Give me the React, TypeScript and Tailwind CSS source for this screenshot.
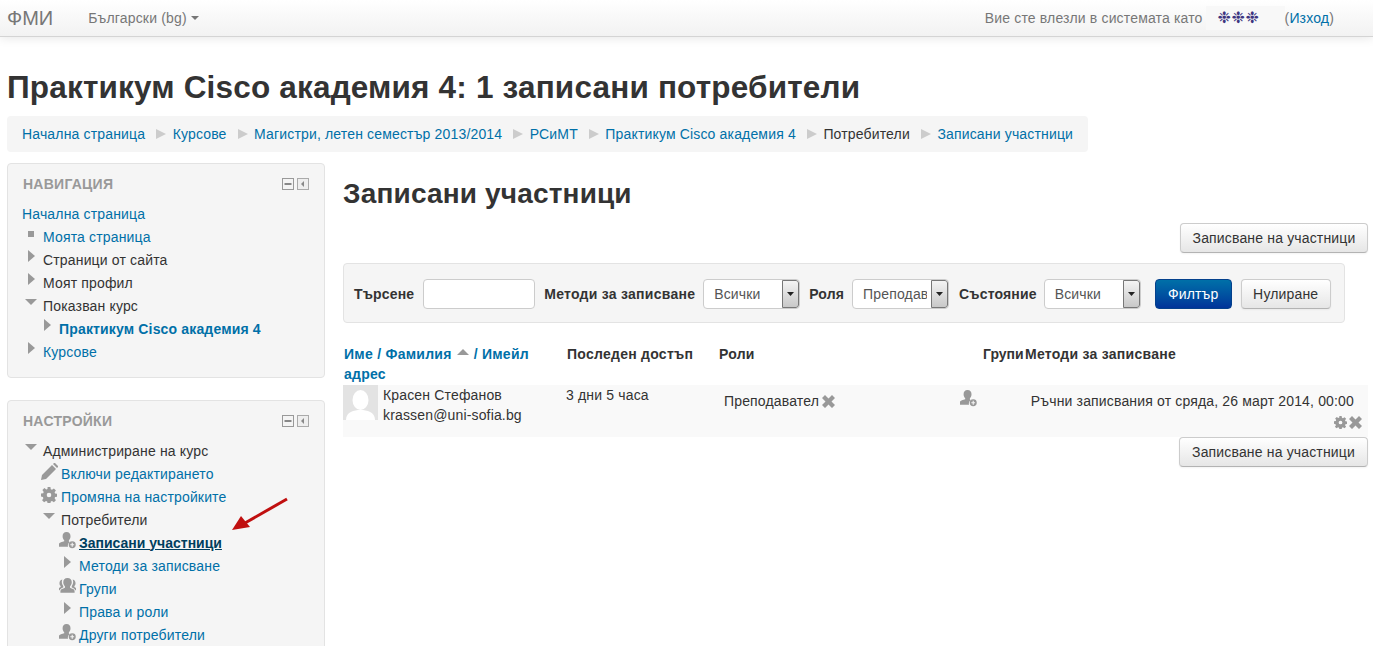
import React from 'react';

const Right = ({ className = '' }: { className?: string }) => (
  <svg width="8" height="12" viewBox="0 0 8 12" className={className}><path d="M1 0l7 6-7 6z" fill="#999" /></svg>
);
const Down = () => (
  <svg width="12" height="8" viewBox="0 0 12 8" className="mt-[3px]"><path d="M0 0h12L6 6z" fill="#999" /></svg>
);
const Bullet = () => (
  <svg width="6" height="6" viewBox="0 0 6 6" className="mt-[4px]"><rect width="6" height="6" fill="#999" /></svg>
);
const Pencil = () => (
  <svg width="17" height="17" viewBox="0 0 17 17" className="-mt-[1px]"><path d="M0 17l1-5L11 2l4 4L5 16zM12 1l1-1h1l3 3v1l-1 1z" fill="#999" /></svg>
);
const Gear = ({ size = 16, className = '' }: { size?: number; className?: string }) => (
  <svg width={size} height={size} viewBox="0 0 16 16" className={className}>
    <path fillRule="evenodd" fill="#999" d="M6.600 0h2.800l.4 2.200 1.200.5L12.900 1.400l2 2-1.300 1.900.5 1.200 2.200.4v2.800l-2.200.4-.5 1.200 1.300 1.900-2 2-1.900-1.300-1.200.5-.4 2.200H6.600l-.4-2.200-1.200-.5-1.900 1.300-2-2 1.300-1.900-.5-1.200L0 9.400V6.600l2.200-.4.5-1.200-1.300-1.900 2-2 1.900 1.300 1.200-.5zM8 5.700a2.300 2.300 0 100 4.600 2.300 2.300 0 000-4.600z" />
  </svg>
);
const Cross = ({ size = 13 }: { size?: number }) => (
  <svg width={size} height={size} viewBox="0 0 13 13"><path d="M0 3l3-3 3.500 3.500L10 0l3 3-3.500 3.500L13 10l-3 3-3.500-3.500L3 13l-3-3 3.500-3.500z" fill="#999" /></svg>
);
const UserPlus = () => (
  <svg width="17" height="17" viewBox="0 0 18 18" className="-mt-[1px]">
    <path fill="#999" d="M8 0c2.800 0 4.200 2 4.200 4.400 0 1.700-.7 3.300-1.700 4.300v1.500l1 .5A4.500 4.500 0 009.500 15.500H0v-2.800c0-1.500 3.500-2.400 5.500-3V8.700C4.500 7.700 3.800 6.100 3.800 4.400 3.800 2 5.200 0 8 0z" />
    <circle cx="14" cy="13.500" r="3.700" fill="#999" />
    <path d="M12 13.500h4M14 11.500v4" stroke="#f4f4f4" strokeWidth="1.200" />
  </svg>
);
const Users = () => (
  <svg width="17" height="17" viewBox="0 0 18 18" className="-mt-[1px]">
    <path fill="#999" d="M9 0c3 0 4.500 2 4.500 4.400 0 1.800-.8 3.400-1.800 4.400v1.500c2.200 1 4.800 1.500 4.800 3.400v1.800H1.500v-1.800c0-1.900 2.600-2.400 4.800-3.400V8.800c-1-1-1.800-2.600-1.800-4.400C4.500 2 6 0 9 0z" />
    <path fill="#999" d="M3.500 1.500C1.500 2 .5 3.500.5 5.500c0 1.300.5 2.400 1.200 3.100v1L0 10.500V13h.7c.4-1.500 1.800-2.200 3.800-3V8.500c-1.500-2-2-4.500-1-7zM14.500 1.500c2 .5 3 2 3 4 0 1.300-.5 2.400-1.200 3.100v1l1.700.9V13h-.7c-.4-1.500-1.800-2.200-3.800-3V8.500c1.500-2 2-4.500 1-7z" />
  </svg>
);
const BlockControls = () => (
  <div className="mt-[1px] flex gap-[3px]">
    <svg width="12" height="12" viewBox="0 0 12 12"><rect x=".5" y=".5" width="11" height="11" fill="#f4f4f4" stroke="#999" /><rect x="2.500" y="5" width="7" height="2" fill="#888" /></svg>
    <svg width="12" height="12" viewBox="0 0 12 12"><rect x=".5" y=".5" width="11" height="11" fill="#eee" stroke="#aaa" /><path d="M7 3v6L4 6z" fill="#888" /></svg>
  </div>
);

const Row = ({ indent, icon, children }: { indent: string; icon?: React.ReactNode; children: React.ReactNode }) => (
  <div className={`flex h-[23px] items-center ${indent}`}>
    <span className="flex h-[23px] w-[18px] shrink-0 items-start justify-center pt-[2px]">{icon}</span>
    <span className="ml-[3px] whitespace-nowrap">{children}</span>
  </div>
);

const Link = ({ children, className = '' }: { children: React.ReactNode; className?: string }) => (
  <a className={`text-[#0070a8] ${className}`}>{children}</a>
);

const Sep = () => (
  <svg width="10" height="10" viewBox="0 0 10 10" className="ml-[11px] mr-[6.500px] shrink-0"><path d="M0 0l10 5-10 5z" fill="#ccc" /></svg>
);

const FakeSelect = ({ value }: { value: string }) => (
  <div className="flex h-[30px] w-[97px] shrink-0 items-stretch overflow-hidden rounded-[4px] border border-[#ccc] bg-white text-[#555]">
    <span className="mr-[4px] flex-1 overflow-hidden whitespace-nowrap pl-[10px] leading-[29px]">{value}</span>
    <span className="flex w-[17px] shrink-0 items-center justify-center rounded-r-[3px] border border-[#777] bg-gradient-to-b from-[#f4f4f4] to-[#c8c8c8]">
      <svg width="7" height="4" viewBox="0 0 7 4"><path d="M0 0h7L3.500 4z" fill="#222" /></svg>
    </span>
  </div>
);

const PlainButton = ({ children, className = '' }: { children: React.ReactNode; className?: string }) => (
  <button className={`h-[30px] rounded-[4px] border border-[#ccc] border-b-[#b3b3b3] bg-gradient-to-b from-white to-[#e6e6e6] text-[#333] shadow-[0_1px_2px_rgba(0,0,0,0.05)] ${className}`}>
    {children}
  </button>
);

export default function App() {
  return (
    <div className="relative h-[646px] overflow-hidden bg-white font-['Liberation_Sans',Arial,sans-serif] text-[14px] leading-[20px] tracking-[0.16px] text-[#333]">
      {/* Navbar */}
      <header className="flex h-[37px] items-center border-b border-[#d4d4d4] bg-gradient-to-b from-white to-[#f2f2f2] pl-[7px] pr-[34px] text-[#777] shadow-[0_1px_10px_rgba(0,0,0,0.1)]">
        <span className="text-[20px] leading-[34px] tracking-normal">ФМИ</span>
        <span className="ml-[35px] flex items-center">
          Български (bg)
          <svg width="8" height="4" viewBox="0 0 8 4" className="ml-[4px]"><path d="M0 0h8L4 4z" fill="#777" /></svg>
        </span>
        <span className="ml-auto">Вие сте влезли в системата като</span>
        <span className="ml-[3px] flex h-[24px] w-[79px] items-center bg-[#f8f8f8] pl-[12px] font-['DejaVu_Sans',sans-serif] text-[16px] tracking-[0.5px] text-[#3d3580]">❉❉❉</span>
        <span className="mr-[5px]">
          (<Link>Изход</Link>)
        </span>
      </header>

      <h1 className="ml-[7px] mt-[30px] h-[40px] whitespace-nowrap text-[31.5px] font-bold leading-[40px] tracking-[0.18px]">
        Практикум Cisco академия 4: 1 записани потребители
      </h1>

      {/* Breadcrumb */}
      <nav className="ml-[7px] mt-[9px] flex h-[36px] w-[1081px] items-center whitespace-nowrap rounded-[4px] bg-[#f5f5f5] px-[15px]">
        <Link>Начална страница</Link>
        <Sep />
        <Link>Курсове</Link>
        <Sep />
        <Link>Магистри, летен семестър 2013/2014</Link>
        <Sep />
        <Link>РСиМТ</Link>
        <Sep />
        <Link>Практикум Cisco академия 4</Link>
        <Sep />
        <span>Потребители</span>
        <Sep />
        <Link>Записани участници</Link>
      </nav>

      <div className="mt-[11px] flex pl-[7px] pr-[5px]">
        {/* Sidebar */}
        <aside className="w-[318px] shrink-0">
          <section className="h-[215px] rounded-[4px] border border-[#e3e3e3] bg-[#f5f5f5] pl-[14px] pr-[15px] pt-[8px]">
            <div className="flex h-[23px] items-center justify-between pl-[1px]">
              <span className="font-bold tracking-[0.26px] text-[#999]">НАВИГАЦИЯ</span>
              <BlockControls />
            </div>
            <div className="mt-[7px]">
              <div className="flex h-[23px] items-center"><Link>Начална страница</Link></div>
              <Row indent="" icon={<Bullet />}><Link>Моята страница</Link></Row>
              <Row indent="" icon={<Right />}>Страници от сайта</Row>
              <Row indent="" icon={<Right />}>Моят профил</Row>
              <Row indent="" icon={<Down />}>Показван курс</Row>
              <Row indent="ml-[16px]" icon={<Right />}><Link className="font-bold">Практикум Cisco академия 4</Link></Row>
              <Row indent="" icon={<Right />}><Link>Курсове</Link></Row>
            </div>
          </section>

          <section className="mt-[22px] rounded-[4px] border border-[#e3e3e3] bg-[#f5f5f5] pb-[20px] pl-[14px] pr-[15px] pt-[8px]">
            <div className="flex h-[23px] items-center justify-between pl-[1px]">
              <span className="font-bold tracking-[0.26px] text-[#999]">НАСТРОЙКИ</span>
              <BlockControls />
            </div>
            <div className="mt-[7px]">
              <Row indent="" icon={<Down />}>Администриране на курс</Row>
              <Row indent="ml-[18px]" icon={<Pencil />}><Link>Включи редактирането</Link></Row>
              <Row indent="ml-[18px]" icon={<Gear className="-ml-[1px]" />}><Link>Промяна на настройките</Link></Row>
              <Row indent="ml-[18px]" icon={<Down />}>Потребители</Row>
              <Row indent="ml-[36px]" icon={<UserPlus />}><Link className="font-bold tracking-normal !text-[#003e5e] underline">Записани участници</Link></Row>
              <Row indent="ml-[36px]" icon={<Right />}><Link>Методи за записване</Link></Row>
              <Row indent="ml-[36px]" icon={<Users />}><Link>Групи</Link></Row>
              <Row indent="ml-[36px]" icon={<Right />}><Link>Права и роли</Link></Row>
              <Row indent="ml-[36px]" icon={<UserPlus />}><Link>Други потребители</Link></Row>
            </div>
          </section>
        </aside>

        {/* Main */}
        <main className="ml-[18px] w-[1025px]">
          <h2 className="mt-[11px] h-[40px] text-[28px] font-bold leading-[40px]">Записани участници</h2>
          <div className="mt-[9px] flex justify-end">
            <PlainButton className="w-[188px]">Записване на участници</PlainButton>
          </div>

          <div className="mt-[10px] flex h-[60px] w-[1002px] items-center rounded-[4px] border border-[#e3e3e3] bg-[#f5f5f5] pl-[10px] pt-[2px]">
            <label className="font-bold">Търсене</label>
            <input className="ml-[9px] h-[30px] w-[112px] shrink-0 rounded-[4px] border border-[#ccc] bg-white" />
            <label className="ml-[9px] mr-[8px] whitespace-nowrap font-bold tracking-[0.26px]">Методи за записване</label>
            <FakeSelect value="Всички" />
            <label className="ml-[9px] mr-[8px] font-bold">Роля</label>
            <FakeSelect value="Преподавател" />
            <label className="ml-[10px] mr-[7px] font-bold">Състояние</label>
            <FakeSelect value="Всички" />
            <button className="ml-[14px] h-[30px] w-[77px] rounded-[4px] border border-[#04408c] bg-gradient-to-b from-[#0070a8] to-[#003399] text-white">Филтър</button>
            <PlainButton className="ml-[9px] w-[90px]">Нулиране</PlainButton>
          </div>

          {/* Participants table */}
          <div className="mt-[21px] flex h-[40px] font-bold tracking-[0.26px]">
            <div className="w-[224px] pl-[1px] pr-[30px]">
              <Link>Име / Фамилия</Link>
              <svg width="12" height="6" viewBox="0 0 12 6" className="mx-[5px] inline-block align-[4px]"><path d="M0 6h12L6 0z" fill="#999" /></svg>
              <Link>/ Имейл адрес</Link>
            </div>
            <div className="w-[152px]">Последен достъп</div>
            <div className="w-[264px]">Роли</div>
            <div className="w-[42px] tracking-normal">Групи</div>
            <div className="whitespace-nowrap">Методи за записване</div>
          </div>
          <div className="mt-[1px] flex h-[52px] bg-[#f9f9f9]">
            <div className="flex w-[223px] shrink-0">
              <div className="relative h-[35px] w-[35px] shrink-0 overflow-hidden bg-[#e3e3e3]">
                <svg width="35" height="35" viewBox="0 0 35 35" className="absolute inset-0">
                  <ellipse cx="17.500" cy="15" rx="8" ry="10" fill="#fff" />
                  <path d="M3 35c0-8 8-10 14.500-10S32 27 32 35z" fill="#fff" />
                </svg>
              </div>
              <div className="ml-[5px]">
                <div>Красен Стефанов</div>
                <div>krassen@uni-sofia.bg</div>
              </div>
            </div>
            <div className="w-[158px] shrink-0">3 дни 5 часа</div>
            <div className="flex w-[236px] shrink-0 items-start pt-[6px]">
              <span>Преподавател</span>
              <span className="ml-[3px] mt-[4px]"><Cross /></span>
            </div>
            <div className="w-[60px] shrink-0 pt-[6px]"><UserPlus /></div>
            <div className="flex flex-1 flex-col items-end pr-[6px] pt-[6px]">
              <div className="mr-[8px] whitespace-nowrap">Ръчни записвания от сряда, 26 март 2014, 00:00</div>
              <div className="mt-[5px] flex items-center gap-[2px]">
                <Gear size={13} />
                <Cross />
              </div>
            </div>
          </div>
          <div className="flex justify-end">
            <PlainButton className="w-[189px]">Записване на участници</PlainButton>
          </div>
        </main>
      </div>

      {/* Red annotation arrow over the settings block */}
      <svg width="64" height="40" viewBox="0 0 64 40" className="absolute left-[229px] top-[495px]">
        <path d="M58 4L16 28" stroke="#c00f0f" strokeWidth="3" />
        <path d="M3 35l9-14 9 11z" fill="#c00f0f" />
      </svg>
    </div>
  );
}
